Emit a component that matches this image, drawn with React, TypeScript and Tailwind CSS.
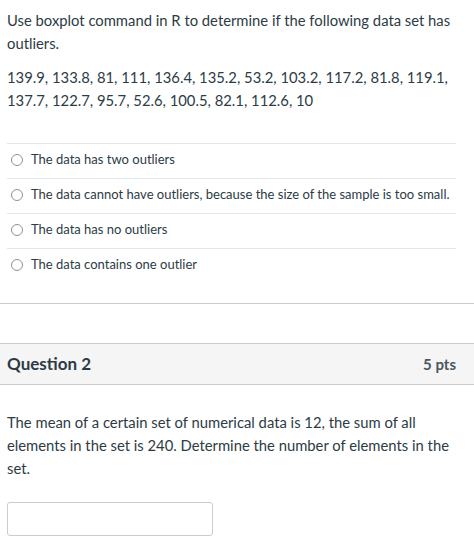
import React from 'react';

const options = [
  'The data has two outliers',
  'The data cannot have outliers, because the size of the sample is too small.',
  'The data has no outliers',
  'The data contains one outlier',
];

export default function App() {
  return (
    <div className="w-[474px] bg-white text-[#2d3b45] font-['Lato','Liberation_Sans',sans-serif]">
      {/* Question 1 body */}
      <div className="px-[7px] pt-[9px]">
        <p className="text-[14.8px] leading-[23px]">
          Use boxplot command in R to determine if the following data set has outliers.
        </p>
        <p className="mt-[11px] text-[14.8px] leading-[23px]">
          139.9, 133.8, 81, 111, 136.4, 135.2, 53.2, 103.2, 117.2, 81.8, 119.1, 137.7, 122.7, 95.7,
          52.6, 100.5, 82.1, 112.6, 10
        </p>
        <div className="mt-[31px] w-[449px]">
          {options.map((opt) => (
            <label
              key={opt}
              className="flex h-[35px] items-center gap-[8px] border-t border-[#e3e6e8] pb-[2px] pl-[4px] text-[13px]"
            >
              <span className="h-[12px] w-[12px] shrink-0 rounded-full border border-[#8a9399] bg-white" />
              <span>{opt}</span>
            </label>
          ))}
        </div>
      </div>

      <div className="mt-[20px] border-t border-[#c7cdd1]" />

      {/* Question 2 */}
      <div className="mt-[39px] flex h-[42px] items-center justify-between border-y border-[#c7cdd1] bg-[#f5f5f5] px-[7px]">
        <h2 className="text-[17px] font-bold text-[#2d3b45]">Question 2</h2>
        <span className="pr-[11px] text-[15px] font-bold text-[#4a5660]">5 pts</span>
      </div>

      <div className="px-[7px] pt-[26px]">
        <p className="text-[14.8px] leading-[23px]">
          The mean of a certain set of numerical data is 12, the sum of all elements in the set is
          240. Determine the number of elements in the set.
        </p>
        <input
          type="text"
          className="mt-[22px] h-[34px] w-[206px] rounded-[3px] border border-[#c7cdd1] bg-white outline-none"
        />
      </div>
    </div>
  );
}
